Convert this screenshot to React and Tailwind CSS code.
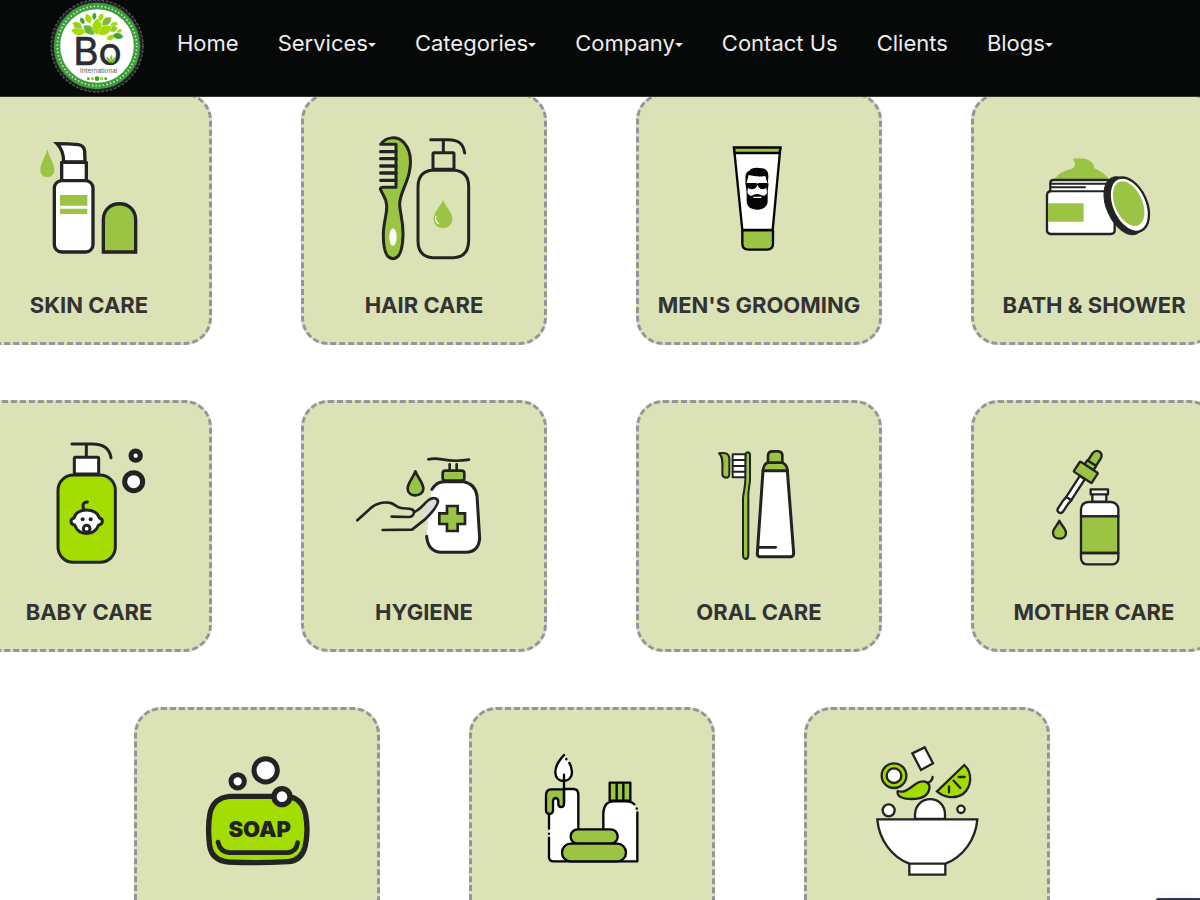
import React from 'react';

const INK = '#222423';
const GREEN = '#9bc445';
const LIME = '#a3dc00';

const navItems = [
  { label: 'Home' },
  { label: 'Services', menu: true },
  { label: 'Categories', menu: true },
  { label: 'Company', menu: true },
  { label: 'Contact Us' },
  { label: 'Clients' },
  { label: 'Blogs', menu: true },
];

// leaves of the logo crown: x, y, length, angle, colour
const leaves = [
  [235, 94, 44, 8, LIME],
  [232, 76, 34, 28, '#8fcf1c'],
  [247, 62, 24, 62, '#3f9d3c'],
  [265, 56, 34, 68, LIME],
  [283, 49, 24, 94, '#3f9d3c'],
  [303, 52, 28, 112, LIME],
  [320, 64, 38, 140, '#7dbb35'],
  [342, 73, 26, 160, LIME],
  [338, 87, 32, 172, '#8fcf1c'],
  [267, 90, 44, 38, '#6cb536'],
  [291, 80, 50, 92, LIME],
  [314, 91, 48, 150, LIME],
  [332, 113, 28, 160, LIME],
  [354, 108, 34, 10, '#3f9d3c'],
  [358, 93, 20, 150, LIME],
];

function Logo() {
  return (
    <svg viewBox="147 0 288 288" className="size-24" role="img" aria-label="Bo International">
      <circle cx="291" cy="138" r="138" fill="#1d1f1e" stroke="#55585a" strokeWidth="4" strokeDasharray="8 5" />
      <circle cx="291" cy="138" r="132" fill="none" stroke="#3d3f40" strokeWidth="4" strokeDasharray="4 7" />
      <circle cx="291" cy="138" r="120" fill="#fff" stroke="#3f9d3c" strokeWidth="19" />
      <circle cx="291" cy="138" r="119" fill="none" stroke="#d8f0d0" strokeWidth="5" strokeDasharray="4 7" />
      {leaves.map(([x, y, len, angle, color]) => (
        <path
          key={`${x}-${y}`}
          d={`M${-len / 2} 0Q0 ${-len / 1.7} ${len / 2} 0Q0 ${len / 1.7} ${-len / 2} 0`}
          transform={`translate(${x} ${y}) rotate(${angle})`}
          fill={color}
          stroke="#fff"
          strokeWidth="1"
        />
      ))}
      <text x="220" y="196" fontFamily="Inter, sans-serif" fontSize="116" fill="#2b2d30" stroke="#2b2d30" strokeWidth="2">Bo</text>
      <path d="M334 190Q318 186 319 171Q332 174 334 190Q334 176 347 170Q350 186 334 190M334 184Q327 174 334 164Q341 174 334 184" fill="#7fc41c" />
      <text x="296" y="218" textAnchor="middle" fontFamily="Inter, sans-serif" fontSize="19" fill="#55585a">International</text>
      <circle cx="265" cy="236" r="4" fill="#3f9d3c" />
      <circle cx="277" cy="236" r="5" fill={LIME} />
      <circle cx="291" cy="236" r="7" fill="#3f9d3c" />
      <circle cx="305" cy="236" r="5" fill={LIME} />
      <circle cx="317" cy="236" r="4" fill="#3f9d3c" />
    </svg>
  );
}

function Icon({ viewBox, children, width = 9 }) {
  return (
    <svg
      viewBox={viewBox}
      className="size-36 shrink-0"
      fill="none"
      stroke={INK}
      strokeWidth={width}
      strokeLinecap="round"
      strokeLinejoin="round"
      aria-hidden="true"
    >
      {children}
    </svg>
  );
}

const SkinIcon = () => (
  <Icon viewBox="52 117 432 432" width={10}>
    <path d="M143 178C136 203 122 220 122 240C122 254 131 261 143 261C156 261 164 253 164 240C164 220 149 203 143 178Z" fill={GREEN} stroke="none" />
    <path d="M192 216C192 190 184 173 172 161Q208 161 236 164Q254 167 255 184L256 216Z" fill="#fff" strokeLinejoin="miter" />
    <path d="M186 217H260V272H186Z" fill="#fff" />
    <rect x="164" y="272" width="116" height="214" rx="22" fill="#fff" />
    <path d="M181 315H263V347H181ZM181 356H263V372H181Z" fill={GREEN} stroke="none" />
    <path d="M311 486V390C311 325 408 325 408 390V486Z" fill={GREEN} strokeLinejoin="miter" />
  </Icon>
);

const HairIcon = () => (
  <Icon viewBox="158 117 432 432">
    <path d="M244 163C260 140 293 136 314 158C334 180 336 216 330 246C322 286 299 314 301 346C303 374 312 395 311 434C310 476 301 506 281 506C260 506 252 474 252 434C252 395 264 374 262 346C261 322 250 316 243 297Q244 291 254 292H290V163Z" fill={GREEN} strokeWidth="9" />
    <path d="M244 185H290M244 206H290M244 228H290M244 249H290M244 271H290" strokeWidth="10" />
    <ellipse cx="281" cy="441" rx="11" ry="26" fill="#fff" stroke="none" />
    <path d="M394 149H446C478 149 492 161 496 189M432 150V186" />
    <rect x="401" y="188" width="63" height="50" rx="3" />
    <path d="M397 241H467Q508 246 508 290V450Q508 502 462 503H400Q356 500 356 452V290Q357 245 397 241Z" />
    <path d="M431 331C421 351 403 369 403 386C403 404 416 414 431 414C447 414 459 403 459 386C459 369 441 351 431 331Z" fill={GREEN} stroke="none" />
    <path d="M409 379Q407 394 417 401" stroke="#fff" strokeWidth="4" />
  </Icon>
);

const MensIcon = () => (
  <Icon viewBox="172 117 432 432" width={7}>
    <path d="M313 173H452L429 420H338Z" fill="#fff" stroke="#050505" strokeLinejoin="miter" />
    <path d="M313 173H452L450 189H315Z" fill={GREEN} stroke="#050505" strokeLinejoin="miter" />
    <path d="M338 421H430V460Q430 479 412 479H356Q338 479 338 460Z" fill={GREEN} stroke="#050505" />
    <g fill="#050505" stroke="none">
      <path d="M348 283C346 258 347 246 359 242C365 232 382 232 397 235C413 237 417 248 416 263L414 283C410 272 410 264 407 258Q382 262 357 255C354 265 353 274 350 283Z" />
      <path d="M350 279H380Q383 282 387 279H414Q414 297 400 298Q387 297 384 284Q380 297 366 298Q351 297 350 279Z" />
      <path d="M351 302Q355 317 366 317Q382 307 400 317Q411 317 414 302V334C414 352 397 359 382 359C367 359 351 352 351 334Z" />
      <path d="M347 280L357 283L352 312Z" />
      <path d="M417 280L408 283L413 312Z" />
    </g>
    <path d="M372 322H394" stroke="#fff" strokeWidth="4" />
  </Icon>
);

const BathIcon = () => (
  <Icon viewBox="188 117 432 432" width={7}>
    <path d="M285 267Q303 244 334 238C352 231 348 216 340 207C367 200 404 207 405 235Q431 246 449 267Z" fill={GREEN} stroke="none" />
    <path d="M273 304V278Q274 270 282 270H447L466 304V422Q465 432 455 432H273Q264 431 263 422V316Q264 304 273 304Z" fill="#fff" />
    <path d="M275 281H440M277 292H377M270 304H440" strokeWidth="6" />
    <path d="M266 340H373V395H266Z" fill={GREEN} stroke="none" />
    <ellipse cx="495" cy="347" rx="53" ry="92" transform="rotate(-24 495 347)" fill={INK} strokeWidth="3" />
    <ellipse cx="510" cy="344" rx="52" ry="86" transform="rotate(-24 510 344)" fill="#fff" />
    <ellipse cx="508" cy="341" rx="41" ry="71" transform="rotate(-24 508 341)" fill={GREEN} stroke="none" />
  </Icon>
);

const BabyIcon = () => (
  <Icon viewBox="52 123 432 432">
    <path d="M217 147H278C314 147 330 162 334 188M260 150V185" />
    <rect x="224" y="187" width="73" height="50" rx="3" fill="#fff" />
    <rect x="175" y="240" width="172" height="262" rx="46" fill={LIME} />
    <path d="M252 343Q245 322 263 321" />
    <path d="M223 369C229 337 292 337 299 369Q309 371 308 380Q307 389 297 390C283 424 238 424 225 390Q214 389 214 379Q214 371 223 369Z" fill="#fff" />
    <circle cx="249" cy="373" r="6" fill={INK} stroke="none" />
    <circle cx="273" cy="373" r="6" fill={INK} stroke="none" />
    <circle cx="261" cy="401" r="10" fill="#fff" strokeWidth="9" />
    <circle cx="408" cy="182" r="14" fill="#fff" strokeWidth="15" />
    <circle cx="402" cy="260" r="27" fill="#fff" strokeWidth="15" />
  </Icon>
);

const HygieneIcon = () => (
  <Icon viewBox="158 123 432 432" width={8}>
    <path d="M397 283Q411 260 434 260H493Q528 267 533 302L541 430Q538 470 500 472H426Q386 470 382 424Z" fill="#fff" stroke="none" />
    <path d="M398 283Q411 260 434 260H493Q528 267 533 302L541 430Q538 470 500 472H426Q386 470 382 424" strokeWidth="9" />
    <rect x="430" y="227" width="65" height="30" rx="8" fill={GREEN} />
    <path d="M451 208V225M472 208V225" />
    <path d="M387 193Q405 189 428 193Q468 201 509 194" />
    <path d="M348 229C342 248 325 263 325 281C325 294 336 301 348 301C361 301 372 293 372 281C372 263 355 248 348 229Z" fill={GREEN} />
    <path d="M369 350L396 315Q407 307 416 317Q413 333 397 352L370 375Z" fill="#dcdcdc" stroke="none" />
    <path d="M174 376L217 337Q239 320 268 323C286 324 289 337 306 339C323 342 344 338 344 352Q342 366 328 366L277 365M345 351C366 342 375 324 388 315C399 307 416 307 416 320C413 339 394 356 377 373L338 404L250 405" />
    <path d="M443 333H475V355H497V387H475V408H443V387H420V355H443Z" fill={GREEN} strokeLinejoin="miter" />
  </Icon>
);

const OralIcon = () => (
  <Icon viewBox="172 123 432 432" width={6}>
    <path d="M268 175Q298 169 299 190V236Q299 248 289 248Q278 248 278 235C278 212 282 184 268 175Z" fill={GREEN} />
    <path d="M309 178H348V247H309Z" fill="#fff" />
    <path d="M309 195H347M309 213H347M309 230H347" />
    <path d="M348 178Q349 172 355 172Q361 173 361 180V257C359 275 355 288 356 310V481Q355 492 348 492Q340 491 340 481V310C341 292 348 273 347 250Z" fill={GREEN} />
    <path d="M400 227H473L492 474Q492 485 484 485H390Q382 484 383 475Z" fill="#fff" strokeWidth="9" />
    <path d="M400 227Q402 206 415 203V181Q416 169 428 169H446Q458 170 458 181V203Q472 208 474 227Z" fill={GREEN} strokeWidth="8" />
    <path d="M415 203H458" strokeWidth="8" />
    <path d="M388 457H438" strokeWidth="8" />
  </Icon>
);

const MotherIcon = () => (
  <Icon viewBox="188 123 432 432" width={7}>
    <g transform="translate(380 231) rotate(33)">
      <path d="M-9 20V94L-11 112V138Q-10 146 -2 146Q6 146 7 138V112L9 94V20Z" fill="#fff" />
      <path d="M-9 95H9" />
      <path d="M-16 -32H16V-16H-16ZM-14 -32V-58Q-12 -73 1 -73Q14 -72 15 -58V-32Z" fill={GREEN} />
      <rect x="-32" y="-17" width="64" height="36" rx="2" fill={GREEN} />
    </g>
    <path d="M300 377C294 391 281 401 281 413C281 425 290 431 300 431C311 431 320 424 320 413C320 401 306 391 300 377Z" fill={GREEN} />
    <path d="M365 364V342Q367 322 387 321H455Q475 323 477 342V364Z" fill="#fff" />
    <path d="M399 298H441V320H399ZM394 283H446V298H394Z" fill="#f0f2e6" />
    <path d="M365 364H477V474H365Z" fill={GREEN} />
    <path d="M365 474V490Q367 507 382 508H460Q476 506 477 490V474Z" />
  </Icon>
);

const SoapIcon = () => (
  <Icon viewBox="165 129 432 432" width={16}>
    <path d="M300 289H470Q518 293 527 345Q536 396 525 441Q514 482 474 485Q385 490 295 486Q246 481 239 438Q232 382 240 340Q250 293 300 289Z" fill={LIME} />
    <path d="M264 426Q270 456 298 458H474Q499 455 503 428" strokeWidth="14" />
    <circle cx="407" cy="211" r="35" fill="#fff" strokeWidth="15" />
    <circle cx="323" cy="244" r="20" fill="#fff" strokeWidth="15" />
    <circle cx="456" cy="290" r="24" fill="#fff" />
    <text x="389" y="411" textAnchor="middle" fontFamily="Inter, sans-serif" fontWeight="900" fontSize="66" fill={INK} stroke="none">SOAP</text>
  </Icon>
);

const SpaIcon = () => (
  <Icon viewBox="165 129 432 432" width={7}>
    <g stroke="#050505">
      <path d="M252 484V267H325Q340 268 340 282V388H415V337Q418 304 446 304H484Q514 308 517 338V484Z" fill="#fff" stroke="none" />
      <path d="M340 388H415V484H340Z" fill="#dae2b6" stroke="none" />
      <path d="M296 164C280 184 271 197 271 216C271 234 282 243 296 243C311 243 321 232 321 216C321 205 316 196 311 187C306 178 296 171 296 164Z" fill="#fff" stroke="none" />
      <path d="M297 165C280 184 271 197 271 216C271 234 282 243 296 243C311 243 321 232 321 216Q320 199 313 189M304 177V178" />
      <path d="M297 268H258Q243 269 243 285V331Q243 342 253 342Q264 342 264 331V302Q266 294 272 294Q280 295 280 304V313Q281 321 289 321Q297 321 297 312Z" fill={GREEN} />
      <path d="M297 224V310M297 267H325Q340 268 340 283V387M252 342V386M252 401V402M252 413V473Q254 484 266 484H517V337M415 387V337Q418 304 446 304H484Q500 304 508 313M515 325V326" />
      <path d="M434 248H496V302H434Z" fill={GREEN} />
      <path d="M455 249V302M475 249V302" />
      <rect x="317" y="388" width="141" height="43" rx="21" fill={GREEN} />
      <rect x="291" y="431" width="192" height="53" rx="26" fill={GREEN} />
    </g>
  </Icon>
);

const SaladIcon = () => (
  <Icon viewBox="165 129 432 432" width={7}>
    <path d="M337 160L374 142L399 190L363 210Z" fill="#fff" strokeLinejoin="miter" />
    <circle cx="282" cy="227" r="37" fill={LIME} />
    <circle cx="282" cy="227" r="22" fill="#fff" />
    <path d="M293 273C320 282 333 257 358 246C377 240 391 250 388 266C384 286 366 297 335 297C311 297 289 291 293 273Z" fill={LIME} />
    <path d="M383 249Q396 244 398 231" />
    <path d="M411 274L493 195C519 219 515 261 489 282C464 298 433 293 411 274Z" fill={LIME} strokeLinejoin="miter" />
    <path d="M447 259V277M461 242L481 264M476 231H494" />
    <circle cx="266" cy="331" r="18" fill="#fff" />
    <circle cx="483" cy="328" r="11" fill="#fff" />
    <path d="M345 357V344C347 282 435 282 435 344V357Z" fill="#fff" />
    <path d="M232 358H532C527 419 489 471 436 491H328C275 471 237 419 232 358ZM328 491H436V524H328Z" fill="#fff" strokeLinejoin="miter" />
  </Icon>
);

const rows = [
  [
    { label: 'SKIN CARE', icon: SkinIcon },
    { label: 'HAIR CARE', icon: HairIcon },
    { label: "MEN'S GROOMING", icon: MensIcon },
    { label: 'BATH & SHOWER', icon: BathIcon },
  ],
  [
    { label: 'BABY CARE', icon: BabyIcon },
    { label: 'HYGIENE', icon: HygieneIcon },
    { label: 'ORAL CARE', icon: OralIcon },
    { label: 'MOTHER CARE', icon: MotherIcon },
  ],
  [
    { name: 'Soap', icon: SoapIcon },
    { name: 'Spa', icon: SpaIcon },
    { name: 'Food', icon: SaladIcon },
  ],
];

function CategoryCard({ label, name, icon: CategoryIcon }) {
  return (
    <a
      href="#"
      aria-label={name}
      className="flex h-[252px] w-[246px] shrink-0 flex-col items-center rounded-[27px] border-3 border-dashed border-[#94949b] bg-[#dae2b6] pt-[33px]"
    >
      <CategoryIcon />
      {label && (
        <h3 className="mt-[18px] text-[22px] leading-7 font-bold whitespace-nowrap text-[#333]">{label}</h3>
      )}
    </a>
  );
}

export default function App() {
  return (
    <div className="h-screen overflow-hidden bg-white font-['Inter',sans-serif]">
      <header className="relative z-10 flex h-[97px] items-start border-b border-[#38352f] bg-[#070908] pl-[49px]">
        <a href="#" className="shrink-0">
          <Logo />
        </a>
        <nav className="ml-8 flex gap-[39px] pt-[29px]">
          {navItems.map((item) => (
            <a key={item.label} href="#" className="flex items-center text-[22px] leading-7 whitespace-nowrap text-[#ececec]">
              {item.label}
              {item.menu && (
                <svg viewBox="0 0 8 4" className="mt-1 h-1 w-2" fill="currentColor" aria-hidden="true">
                  <path d="M0 0H8L4 4Z" />
                </svg>
              )}
            </a>
          ))}
        </nav>
      </header>

      <main className="-mt-1 flex flex-col gap-[55px] pr-[17px]">
        {rows.map((row, i) => (
          <div key={i} className="flex justify-center gap-[89px]">
            {row.map((card) => (
              <CategoryCard key={card.label || card.name} {...card} />
            ))}
          </div>
        ))}
      </main>

      {/* top edge of the chat panel docked below the fold */}
      <div className="fixed right-0 bottom-0 h-0.5 w-11 rounded-tl-md bg-[#34354f] shadow-[0_0_14px_rgba(0,0,0,0.2)]" />
    </div>
  );
}
